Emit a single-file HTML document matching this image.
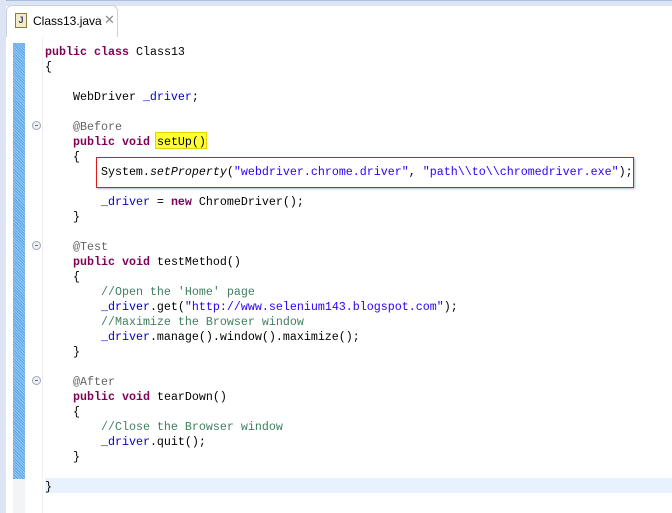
<!DOCTYPE html>
<html><head><style>
body{margin:0;width:672px;height:513px;overflow:hidden;background:#fff;position:relative;font-family:"Liberation Mono",monospace;}
.top{position:absolute;left:0;top:0;width:672px;height:6px;background:#dde4f3;border-top:1px solid #a9bfdc;box-sizing:border-box}
.lstrip{position:absolute;left:0;top:0;width:6px;height:513px;background:#dde4f3}
.tab{position:absolute;left:6px;top:5px;width:112px;height:32px;background:#fff;border:1px solid #c9d2e2;border-bottom:none;border-radius:6px 6px 0 0;box-sizing:border-box;font-family:"Liberation Sans",sans-serif;font-size:12px;color:#000}
.hatch{position:absolute;left:13px;top:43px;width:12px;height:436px;background:#5aa4e8;background-image:repeating-linear-gradient(45deg,#9cc9f3 0 1px,transparent 1px 2px)}
.ruler{position:absolute;left:13px;top:479px;width:12px;height:34px;background:#f3f4f6}
.sep{position:absolute;left:42px;top:37px;width:1px;height:476px;background:#eef0f3}
.code{position:absolute;left:45px;top:45px;font-size:11.67px;line-height:15px;white-space:pre;color:#000}
.k{color:#7f0055;font-weight:bold}
.a{color:#646464}
.f{color:#0000c0}
.s{color:#2a00ff}
.c{color:#3f7f5f}
.i{font-style:italic}
.fold{position:absolute;left:32px;width:9px;height:9px;border:1px solid #a0a8b8;border-radius:50%;box-sizing:border-box;background:#eef0f4}
.fold:after{content:"";position:absolute;left:2px;top:3px;width:3px;height:1px;background:#607090}
</style></head><body>
<div class="top"></div><div class="lstrip"></div>
<div class="tab"><span style="position:absolute;left:8px;top:7px;width:10px;height:13px;border:1px solid #8a7a40;background:#f4ecc8;font-size:9px;line-height:13px;text-align:center;color:#304080;font-weight:bold">J</span><span style="position:absolute;left:26px;top:8px">Class13.java</span><span style="position:absolute;left:97px;top:6px;color:#8a8a8a;font-size:13px">✕</span></div>
<div class="hatch"></div><div class="ruler"></div><div class="sep"></div>
<div style="position:absolute;left:45px;top:478px;width:627px;height:15px;background:#e8f2fe"></div>
<div style="position:absolute;left:155px;top:132px;width:52px;height:17px;background:#ffff33;border:1px solid #e5d400;box-sizing:border-box"></div>
<div style="position:absolute;left:96px;top:157px;width:538px;height:31px;border:1px solid #d81c1c;box-sizing:border-box;box-shadow:1px 1px 2px #bbb"></div>
<div class="fold" style="top:121px"></div><div class="fold" style="top:241px"></div><div class="fold" style="top:376px"></div>
<div class="code"><span class="k">public</span> <span class="k">class</span> Class13
{

    WebDriver <span class="f">_driver</span>;

    <span class="a">@Before</span>
    <span class="k">public</span> <span class="k">void</span> setUp()
    {
        System.<span class="i">setProperty</span>(<span class="s">"webdriver.chrome.driver"</span>, <span class="s">"path\\to\\chromedriver.exe"</span>);

        <span class="f">_driver</span> = <span class="k">new</span> ChromeDriver();
    }

    <span class="a">@Test</span>
    <span class="k">public</span> <span class="k">void</span> testMethod()
    {
        <span class="c">//Open the 'Home' page</span>
        <span class="f">_driver</span>.get(<span class="s">"http://www.selenium143.blogspot.com"</span>);
        <span class="c">//Maximize the Browser window</span>
        <span class="f">_driver</span>.manage().window().maximize();
    }

    <span class="a">@After</span>
    <span class="k">public</span> <span class="k">void</span> tearDown()
    {
        <span class="c">//Close the Browser window</span>
        <span class="f">_driver</span>.quit();
    }

}</div>
</body></html>
